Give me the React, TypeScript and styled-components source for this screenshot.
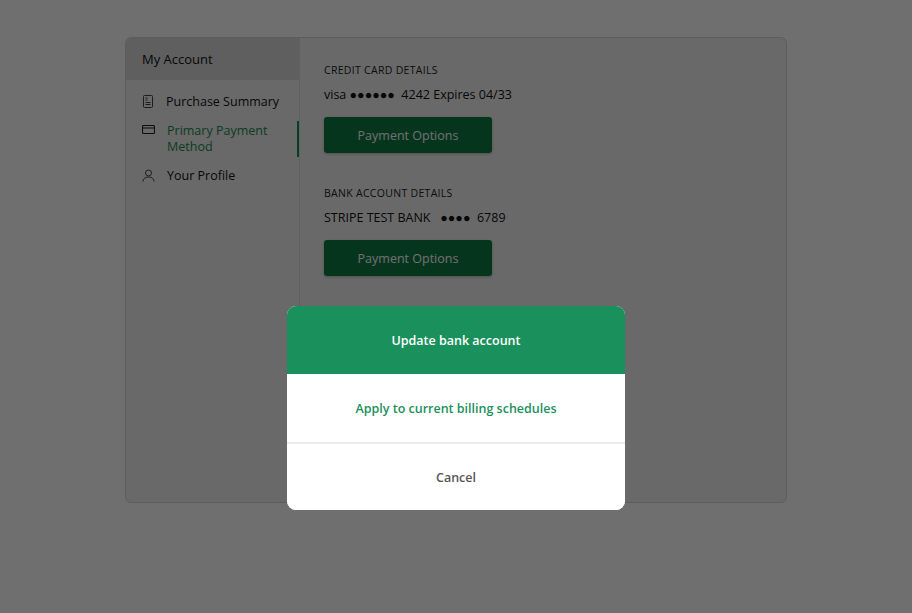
import React from "react";
import styled, { createGlobalStyle } from "styled-components";

const Global = createGlobalStyle`
  html, body { margin: 0; padding: 0; background: #fff; }
  body { font-family: "Open Sans", "Noto Sans", sans-serif; color: #222; }
`;

const Page = styled.div`
  width: 912px; height: 613px; box-sizing: border-box;
  padding: 37px 0 0 125px;
`;
const Card = styled.div`
  width: 662px; height: 466px; box-sizing: border-box;
  border: 1px solid #d6d6d6; border-radius: 6px; background: #f1f1f1;
  display: flex; overflow: hidden;
`;
const Sidebar = styled.div`
  width: 173px; border-right: 1px solid #dcdcdc; display: flex; flex-direction: column;
`;
const SideHead = styled.div`
  height: 42px; background: #dadada; padding-left: 16px;
  display: flex; align-items: center; font-size: 13px; color: #111;
`;
const Nav = styled.div` padding-top: 12px; display: flex; flex-direction: column; gap: 9px; `;
const NavItem = styled.div<{ $active?: boolean }>`
  display: flex; gap: 12px; padding: 2px 10px 2px 16px; font-size: 12.5px; line-height: 16px;
  color: ${p => (p.$active ? "#1a8a54" : "#111")};
  border-right: 2px solid ${p => (p.$active ? "#1a8a54" : "transparent")};
  svg { flex: none; margin-top: 1px; }
`;
const Main = styled.div` padding: 25px 24px; display: flex; flex-direction: column; `;
const Label = styled.div` font-size: 10.5px; letter-spacing: 0.3px; color: #222; text-transform: uppercase; `;
const Value = styled.div` font-size: 12.5px; margin-top: 9px; color: #111; `;
const Btn = styled.div<{ $mb?: number }>`
  width: 168px; height: 36px; margin-top: 14px; margin-bottom: ${p => p.$mb ?? 0}px;
  background: #0f7a45; color: #fff; border-radius: 3px; font-size: 12.5px;
  display: flex; align-items: center; justify-content: center;
  box-shadow: 0 1px 3px rgba(0,0,0,0.25);
`;
const Overlay = styled.div`
  position: fixed; inset: 0; background: rgba(0,0,0,0.565);
  display: flex; justify-content: center; align-items: flex-start; padding-top: 306px;
`;
const Modal = styled.div` width: 338px; border-radius: 9px; overflow: hidden; background: #fff; `;
const ModalRow = styled.div<{ $kind: "head" | "primary" | "cancel" }>`
  height: 68px; display: flex; align-items: center; justify-content: center;
  font-size: 12.5px; font-weight: 600; box-sizing: border-box;
  background: ${p => (p.$kind === "head" ? "#1a915c" : "#fff")};
  color: ${p => (p.$kind === "head" ? "#fff" : p.$kind === "primary" ? "#1a915c" : "#555")};
  border-top: ${p => (p.$kind === "cancel" ? "2px solid #ececec" : "none")};
`;

const Receipt = () => (
  <svg width="12" height="13" viewBox="0 0 12 13" fill="none" stroke="#444" strokeWidth="1">
    <rect x="1.5" y="0.5" width="9" height="12" rx="1" />
    <path d="M3.5 3h2M3.5 5h2M3.5 7.5h5M3.5 9.5h5" />
  </svg>
);
const CardIcon = () => (
  <svg width="13" height="11" viewBox="0 0 13 11" fill="none" stroke="#222" strokeWidth="1.1">
    <rect x="0.5" y="1.5" width="12" height="8" rx="1" />
    <path d="M0.5 4h12" />
  </svg>
);
const UserIcon = () => (
  <svg width="13" height="13" viewBox="0 0 13 13" fill="none" stroke="#444" strokeWidth="1">
    <circle cx="6.5" cy="4" r="3" />
    <path d="M1 12.5c0-3 2.5-4.5 5.5-4.5s5.5 1.5 5.5 4.5" />
  </svg>
);

export default function App() {
  return (
    <>
      <Global />
      <Page>
        <Card>
          <Sidebar>
            <SideHead>My Account</SideHead>
            <Nav>
              <NavItem><Receipt />Purchase Summary</NavItem>
              <NavItem $active><CardIcon />Primary Payment Method</NavItem>
              <NavItem><UserIcon />Your Profile</NavItem>
            </Nav>
          </Sidebar>
          <Main>
            <Label>Credit card details</Label>
            <Value>visa ●●●●●● &nbsp;4242 Expires 04/33</Value>
            <Btn $mb={33}>Payment Options</Btn>
            <Label>Bank account details</Label>
            <Value>STRIPE TEST BANK &nbsp;&nbsp;●●●● &nbsp;6789</Value>
            <Btn>Payment Options</Btn>
          </Main>
        </Card>
      </Page>
      <Overlay>
        <Modal>
          <ModalRow $kind="head">Update bank account</ModalRow>
          <ModalRow $kind="primary">Apply to current billing schedules</ModalRow>
          <ModalRow $kind="cancel">Cancel</ModalRow>
        </Modal>
      </Overlay>
    </>
  );
}
